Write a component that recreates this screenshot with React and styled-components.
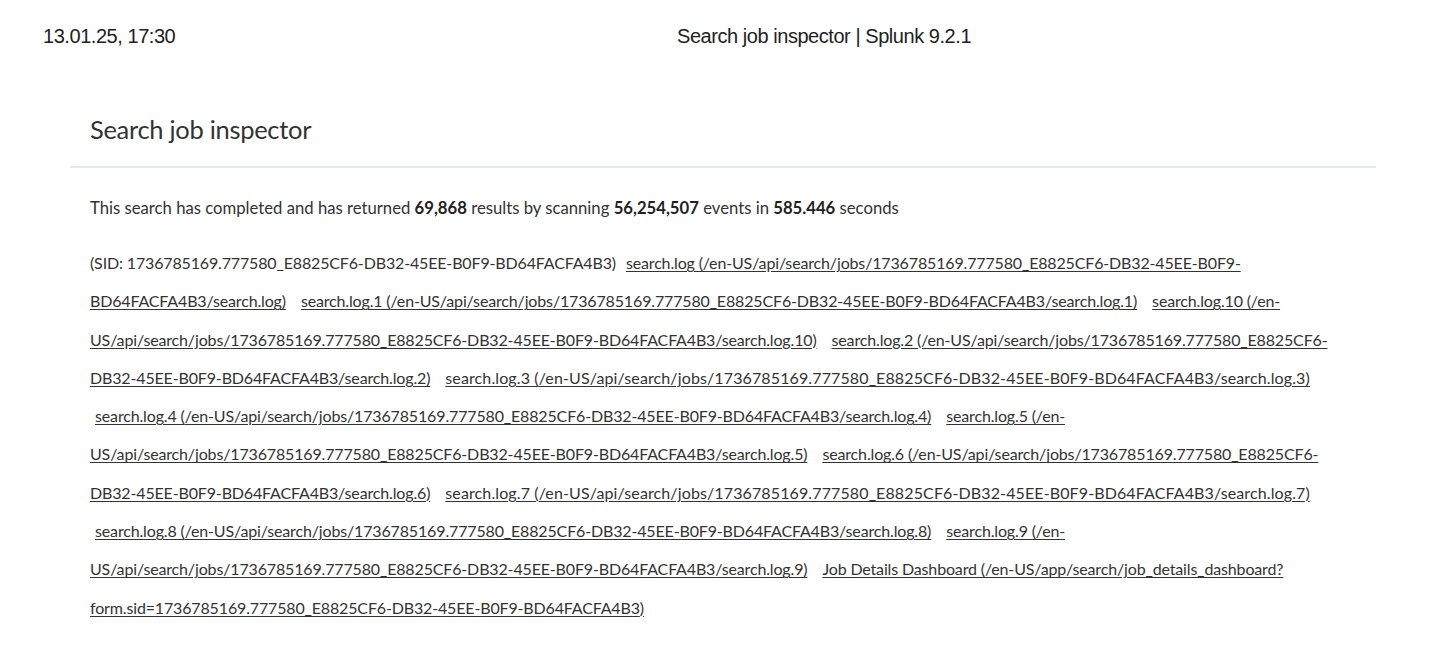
import React from 'react'
import styled, { createGlobalStyle } from 'styled-components'

const SID = '1736785169.777580_E8825CF6-DB32-45EE-B0F9-BD64FACFA4B3'
const JOBS = `/en-US/api/search/jobs/${SID}`

const GlobalStyle = createGlobalStyle`
    html, body {
        margin: 0;
        padding: 0;
        background: #ffffff;
    }
    body {
        font-family: Lato, "Liberation Sans", Arial, sans-serif;
        color: #333333;
    }
`

export default function App() {
    return (
        <Page>
            <GlobalStyle />
            <PrintHeader>
                <Stamp>13.01.25, 17:30</Stamp>
                <DocTitle>Search job inspector | Splunk 9.2.1</DocTitle>
            </PrintHeader>
            <Inspector>
                <Title>Search job inspector</Title>
                <Divider />
                <Body>
                    <Summary>
                        This search has completed and has returned <b>69,868</b> results by scanning{' '}
                        <b>56,254,507</b> events in <b>585.446</b> seconds
                    </Summary>
                    <Links>
                        <Line>
                            <Plain>(SID: {SID})</Plain>
                            <Link href="#">search.log (/en-US/api/search/jobs/1736785169.777580_E8825CF6-DB32-45EE-B0F9-</Link>
                        </Line>
                        <Line>
                            <Link href="#">BD64FACFA4B3/search.log)</Link>
                            <Link href="#">search.log.1 ({JOBS}/search.log.1)</Link>
                            <Link href="#">search.log.10 (/en-</Link>
                        </Line>
                        <Line>
                            <Link href="#">US/api/search/jobs/{SID}/search.log.10)</Link>
                            <Link href="#">search.log.2 (/en-US/api/search/jobs/1736785169.777580_E8825CF6-</Link>
                        </Line>
                        <Line>
                            <Link href="#">DB32-45EE-B0F9-BD64FACFA4B3/search.log.2)</Link>
                            <Link href="#" $wide>search.log.3 ({JOBS}/search.log.3)</Link>
                        </Line>
                        <Line $indent>
                            <Link href="#">search.log.4 ({JOBS}/search.log.4)</Link>
                            <Link href="#">search.log.5 (/en-</Link>
                        </Line>
                        <Line>
                            <Link href="#">US/api/search/jobs/{SID}/search.log.5)</Link>
                            <Link href="#">search.log.6 (/en-US/api/search/jobs/1736785169.777580_E8825CF6-</Link>
                        </Line>
                        <Line>
                            <Link href="#">DB32-45EE-B0F9-BD64FACFA4B3/search.log.6)</Link>
                            <Link href="#" $wide>search.log.7 ({JOBS}/search.log.7)</Link>
                        </Line>
                        <Line $indent>
                            <Link href="#">search.log.8 ({JOBS}/search.log.8)</Link>
                            <Link href="#">search.log.9 (/en-</Link>
                        </Line>
                        <Line>
                            <Link href="#">US/api/search/jobs/{SID}/search.log.9)</Link>
                            <Link href="#">Job Details Dashboard (/en-US/app/search/job_details_dashboard?</Link>
                        </Line>
                        <Line>
                            <Link href="#">form.sid={SID})</Link>
                        </Line>
                    </Links>
                </Body>
            </Inspector>
        </Page>
    )
}

const Page = styled.div`
    width: 1434px;
    min-height: 662px;
    box-sizing: border-box;
    padding-top: 22px;
`
const PrintHeader = styled.header`
    display: grid;
    grid-template-columns: 634px auto;
    padding-left: 43px;
    font-family: "Liberation Sans", Arial, sans-serif;
    font-size: 20px;
    letter-spacing: -0.45px;
    line-height: 28px;
    color: #222222;
`
const Stamp = styled.div``
const DocTitle = styled.div``
const Inspector = styled.main`
    margin: 62px 58px 0 70px;
`
const Title = styled.h1`
    margin: 0;
    padding-left: 20px;
    font-weight: normal;
    font-size: 25.5px;
    letter-spacing: -0.3px;
    line-height: 34px;
    color: #333333;
`
const Divider = styled.hr`
    margin: 20px 0 0;
    border: 0;
    border-top: 2px solid #e4e8ec;
`
const Body = styled.section`
    padding: 0 20px;
    color: #333333;
`
const Summary = styled.p`
    margin: 0;
    padding-top: 29px;
    font-size: 16.7px;
    line-height: 22px;
    b {
        font-weight: bold;
        color: #222222;
    }
`
const Links = styled.div`
    padding-top: 25px;
    font-size: 16px;
    letter-spacing: -0.15px;
`
const Line = styled.div`
    display: flex;
    gap: 15px;
    white-space: nowrap;
    line-height: 38.3px;
    padding-left: ${p => (p.$indent ? '5px' : '0')};
`
const Plain = styled.span`
    margin-right: -5px;
`
const Link = styled.a`
    color: #333333;
    text-decoration: underline;
    text-underline-offset: 2px;
    letter-spacing: ${p => (p.$wide ? '0.12px' : 'inherit')};
`
